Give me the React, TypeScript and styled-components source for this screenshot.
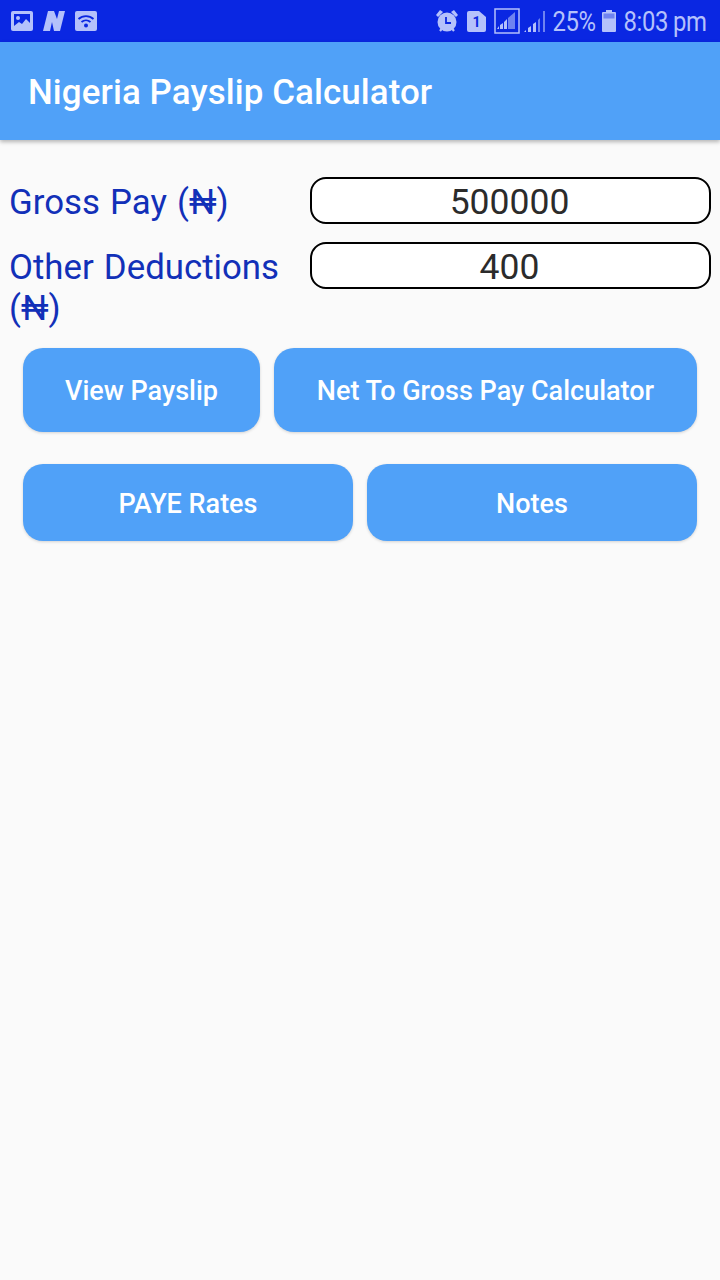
import React from "react";
import styled, { createGlobalStyle } from "styled-components";

const Global = createGlobalStyle`
  html, body { margin: 0; padding: 0; background: #fafafa; }
  * { box-sizing: border-box; }
  body { font-family: Roboto, "Liberation Sans", sans-serif; }
`;
const Screen = styled.div`
  width: 720px; height: 1280px; background: #fafafa; display: flex; flex-direction: column; overflow: hidden;
`;
const StatusBar = styled.div`
  height: 42px; background: #0a27e2; display: flex; align-items: center; justify-content: space-between;
  padding: 0 14px 0 11px; color: #b4c1fb;
`;
const StatusGroup = styled.div`
  display: flex; align-items: center; gap: ${(p: { $gap?: number }) => p.$gap ?? 9}px;
`;
const StatusText = styled.span<{ $w: number }>`
  display: inline-flex; justify-content: center; width: ${(p) => p.$w}px;
  font-size: 27px; line-height: 42px; padding-top: 2px; letter-spacing: -0.5px; word-spacing: -0.5px; white-space: nowrap;
  transform: scaleX(0.885);
`;
const AppBar = styled.header`
  height: 98px; background: #50a1f8; display: flex; align-items: center; padding: 2px 0 0 28px;
  box-shadow: 0 2px 4px rgba(0,0,0,.28); position: relative;
`;
const Title = styled.h1`
  margin: 0; font-size: 34.9px; font-weight: 500; color: #fff; letter-spacing: 0.1px;
`;
const Content = styled.main`
  padding: 37px 9px 0 9px; display: flex; flex-direction: column;
`;
const FormRow = styled.div`
  display: grid; grid-template-columns: 301px 401px; margin-bottom: ${(p: { $mb: number }) => p.$mb}px;
`;
const Label = styled.label`
  font-size: 34.8px; line-height: 41px; word-spacing: 1.5px; color: #1230b8; padding-top: 5px; padding-right: 10px;
`;
const Field = styled.div`
  height: 47px; border: 2px solid #000; border-radius: 16px; background: #fff; padding-right: 2px;
  font-size: 35.5px; line-height: 47px; text-align: center; color: #2b2b2b;
`;
const ButtonRow = styled.div`
  display: grid; gap: 14px; padding: 0 14px; grid-template-columns: ${(p: { $cols: string }) => p.$cols};
`;
const ActionButton = styled.button`
  height: ${(p: { $h: number }) => p.$h}px; border: 0; border-radius: 20px; background: #50a1f8; color: #fff;
  font-family: Roboto, sans-serif; font-size: 27px; font-weight: 500; padding: 2px 0 0;
  box-shadow: 0 1px 3px rgba(0,0,0,.16);
`;
const Spacer = styled.div`
  height: ${(p: { $h: number }) => p.$h}px;
`;

const c = "#b4c1fb";
const bg = "#0a27e2";
const mid = "#6f83f0";

export default function App() {
  return (
    <Screen>
      <Global />
      <StatusBar>
        <StatusGroup $gap={10}>
          <svg width="22" height="20" viewBox="0 0 22 20">
            <rect width="22" height="20" rx="2" fill={c} />
            <rect x="3" y="3" width="16" height="14" fill={bg} />
            <circle cx="7" cy="7" r="2" fill={c} />
            <path d="M3 15l5-4 3 2 4-5 4 4v5H3z" fill={c} />
          </svg>
          <svg width="22" height="20" viewBox="0 0 22 20">
            <path d="M5 0h6l3 8 2-8h6l-5 20h-6L9 11l-2 9H0z" fill={c} />
          </svg>
          <svg width="22" height="20" viewBox="0 0 22 20">
            <rect width="22" height="20" rx="2" fill={c} />
            <path d="M3.5 8a11 11 0 0 1 15 0M6.5 11a7 7 0 0 1 9 0" stroke={bg} strokeWidth="1.8" fill="none" />
            <circle cx="11" cy="14.5" r="2" fill={bg} />
          </svg>
        </StatusGroup>
        <StatusGroup $gap={8}>
          <svg width="24" height="24" viewBox="0 0 24 24">
            <path d="M1 6l4-5 3 2-5 5zM23 6l-4-5-3 2 5 5z" fill={c} />
            <circle cx="12" cy="13" r="9.5" fill={c} />
            <path d="M11 8v6h5" stroke={bg} strokeWidth="1.8" fill="none" />
            <path d="M5 22l2-2.5M19 22l-2-2.5" stroke={c} strokeWidth="2.2" />
          </svg>
          <svg width="19" height="21" viewBox="0 0 19 21">
            <path d="M2 0h10l7 6v13a2 2 0 0 1-2 2H2a2 2 0 0 1-2-2V2a2 2 0 0 1 2-2z" fill={c} />
            <text x="9.5" y="16" fontSize="14" fontWeight="700" textAnchor="middle" fill={bg} fontFamily="Roboto">1</text>
          </svg>
          <svg width="26" height="26" viewBox="0 0 26 26">
            <rect x="1" y="1" width="24" height="24" fill="none" stroke={c} strokeWidth="1.5" />
            <path d="M21 4v17h-7V10z" fill={mid} />
            <path d="M13 11v10h-3v-7zM9 15v6H6v-4zM5 18v3H3z" fill={c} />
          </svg>
          <svg width="21" height="21" viewBox="0 0 21 21" style={{ marginLeft: -4 }}>
            <path d="M0 21h2v-2zM4 21h3v-6l-3 2zM9 21h3V11l-3 2z" fill={c} />
            <path d="M14 21h2V7l-2 2zM19 21h2V0h-2z" fill={mid} />
          </svg>
          <StatusText $w={42}>25%</StatusText>
          <svg width="14" height="22" viewBox="0 0 14 22" style={{ marginLeft: -1 }}>
            <path d="M4 0h6v2h3a1 1 0 0 1 1 1v18a1 1 0 0 1-1 1H1a1 1 0 0 1-1-1V3a1 1 0 0 1 1-1h3z" fill={c} />
            <rect x="1.5" y="3.5" width="11" height="5" fill={mid} />
          </svg>
          <StatusText $w={82}>8:03 pm</StatusText>
        </StatusGroup>
      </StatusBar>
      <AppBar>
        <Title>Nigeria Payslip Calculator</Title>
      </AppBar>
      <Content>
        <FormRow $mb={18}>
          <Label>Gross Pay (₦)</Label>
          <Field>500000</Field>
        </FormRow>
        <FormRow $mb={19}>
          <Label>Other Deductions (₦)</Label>
          <Field>400</Field>
        </FormRow>
        <ButtonRow $cols="237px 423px">
          <ActionButton $h={84}>View Payslip</ActionButton>
          <ActionButton $h={84}>Net To Gross Pay Calculator</ActionButton>
        </ButtonRow>
        <Spacer $h={32} />
        <ButtonRow $cols="330px 330px">
          <ActionButton $h={77}>PAYE Rates</ActionButton>
          <ActionButton $h={77}>Notes</ActionButton>
        </ButtonRow>
      </Content>
    </Screen>
  );
}
